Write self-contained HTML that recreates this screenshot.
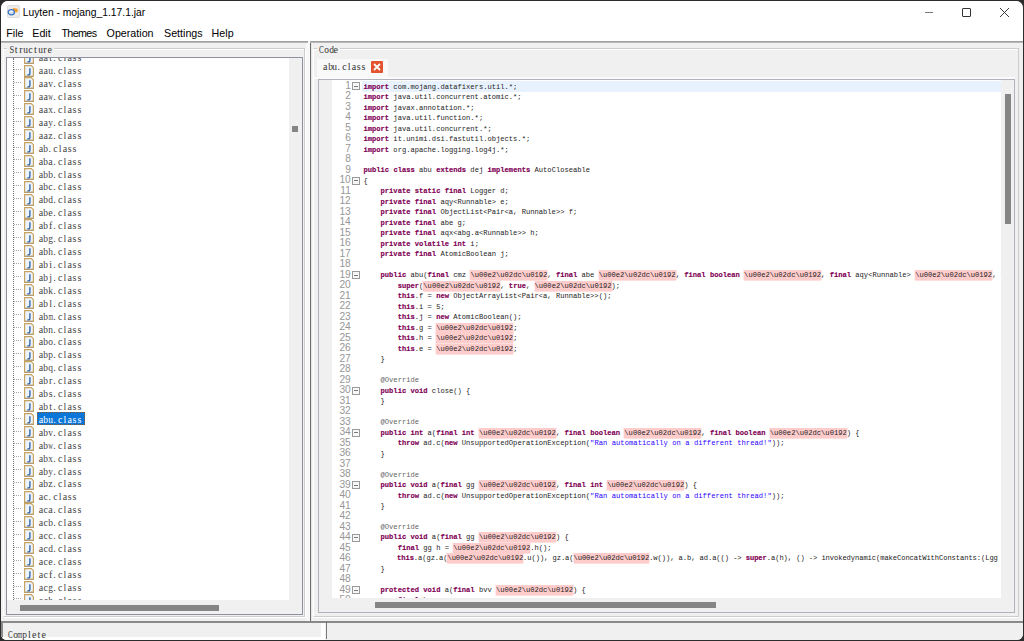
<!DOCTYPE html>
<html><head><meta charset="utf-8"><style>
html,body{margin:0;padding:0;}
body{width:1024px;height:641px;overflow:hidden;background:#2c2c2c;position:relative;font-family:"Liberation Sans",sans-serif;}
.abs{position:absolute;}
#win{position:absolute;left:1px;top:1px;width:1022px;height:639px;background:#f0f0f0;border-radius:7px 7px 6px 6px;overflow:hidden;}
#in{position:absolute;left:-1px;top:-1px;width:1024px;height:641px;}
#in div{position:absolute;}
.title{left:22.7px;top:5.8px;font-size:10.3px;color:#000;white-space:pre;line-height:14px;}
.menu{top:27px;font-size:10.7px;color:#000;line-height:13px;white-space:pre;}
.tt{left:38.6px;font-family:"Liberation Serif",serif;font-size:10px;line-height:11px;height:11px;color:#454545;white-space:pre;}
.tt.sel{color:#fff;}
.selbox{left:37px;width:46px;height:10.5px;background:#0a76d8;border:1px dotted #8a5a30;}
.tdash{left:14px;width:7px;height:0;border-top:1px dotted #a8a8a8;}
.ticon{position:absolute;left:24px;}
.J{left:2.2px;top:-0.5px;font-size:8px;font-weight:bold;color:#2f6fb8;line-height:10px;font-family:"Liberation Sans",sans-serif;}
.cl{transform:scaleY(1.1);transform-origin:0 7.1px;left:363.45px;font-family:"Liberation Mono",monospace;font-size:7.13px;line-height:10.48px;height:10.48px;white-space:pre;color:#1c1c1c;}
.k{color:#7f0055;font-weight:bold;-webkit-text-stroke:0.15px #7f0055;}
.s{color:#2a00ff;letter-spacing:0.05px;}
.an{color:#646464;}
.u{display:inline-block;vertical-align:top;height:10.01px;line-height:10.48px;background:linear-gradient(to bottom,transparent 0.74px,#ffcccc 0.74px);box-shadow:0.4px 0 0 #ffcccc,-0.4px 0 0 #ffcccc;}
.ln{left:320px;width:30.8px;text-align:right;font-size:10.2px;line-height:10.48px;color:#969696;}
.fold{left:352px;width:6px;height:6px;border:1px solid #9a9a9a;background:#f6f6f6;}
.fold::after{content:"";position:absolute;left:1px;top:2.5px;width:4px;height:1.2px;background:#7a7a7a;}
.etched{border:1px solid #cdcdcd;border-left-color:#fff;box-shadow:inset 0 1px 0 #fff, 1px 1px 0 #fff;}
.spb{border:1px solid #8c90a0;}
.spb2{border:1px solid #b1b2ba;}
.thumb{background:#858585;}
.ptitle{font-family:"Liberation Serif",serif;font-size:10px;line-height:11px;white-space:pre;color:#333;background:#f0f0f0;padding:0 2px;}

i.c{font-style:normal;display:inline-block;text-align:center;}

</style></head><body>
<div id="win"><div id="in">
  <!-- title + menu white -->
  <div style="left:0;top:0;width:1024px;height:41px;background:#fff;"></div>
  <!-- app icon -->
  <svg style="position:absolute;left:7px;top:5px" width="13" height="13" viewBox="0 0 13 13"><rect x="0.5" y="0.5" width="12" height="12" rx="1.5" fill="#ededed" stroke="#dedede"/><path d="M6 3 L10 3.6 L11.2 5.4 L10 7.2 L6 7.6 Z" fill="#f5a032"/><ellipse cx="4.3" cy="7.2" rx="3.1" ry="2.6" fill="#f6f9fd" stroke="#3b73c1" stroke-width="1.3"/><path d="M2.3 8 H6.5" stroke="#8fb0d8" stroke-width="0.8"/></svg>
  <div class="title">Luyten - mojang_1.17.1.jar</div>
  <!-- window controls -->
  <div style="left:925px;top:12px;width:8px;height:1px;background:#777;"></div>
  <div style="left:962px;top:8px;width:7px;height:7px;border:1px solid #333;border-radius:1px;"></div>
  <svg style="position:absolute;left:999px;top:7px" width="11" height="11" viewBox="0 0 11 11"><path d="M1 1 L10 10 M10 1 L1 10" stroke="#3a3a3a" stroke-width="1"/></svg>
  <!-- menu -->
  <div class="menu" style="left:6.3px">File</div>
  <div class="menu" style="left:32.3px">Edit</div>
  <div class="menu" style="left:61.4px;letter-spacing:-0.6px">Themes</div>
  <div class="menu" style="left:106.6px">Operation</div>
  <div class="menu" style="left:164px">Settings</div>
  <div class="menu" style="left:211.6px">Help</div>
  <!-- menubar bottom line -->
  <div style="left:0;top:41px;width:1024px;height:1px;background:#a0a0a0;"></div>
  <div style="left:0;top:42px;width:1024px;height:1px;background:#b8b8b8;"></div>

  <!-- LEFT PANEL -->
  <div class="etched" style="left:3px;top:48px;width:300px;height:567px;"></div>
  <div class="ptitle" style="left:7px;top:43.7px;"><i class="c" style="width:4.8px"><i class="c" style="width:5.56px;margin-left:-0.38px;transform:scaleX(0.845)">S</i></i><i class="c" style="width:4.8px">t</i><i class="c" style="width:4.8px">r</i><i class="c" style="width:4.8px"><i class="c" style="width:5.00px;margin-left:-0.10px;transform:scaleX(0.940)">u</i></i><i class="c" style="width:4.8px">c</i><i class="c" style="width:4.8px">t</i><i class="c" style="width:4.8px"><i class="c" style="width:5.00px;margin-left:-0.10px;transform:scaleX(0.940)">u</i></i><i class="c" style="width:4.8px">r</i><i class="c" style="width:4.8px">e</i></div>
  <div class="spb" style="left:6px;top:57px;width:295px;height:556px;background:#f0f0f0;"></div>
  <div style="left:7px;top:58px;width:282px;height:542px;background:#fff;overflow:hidden;">
    <div style="left:-7px;top:-58px;width:300px;height:660px;">
      <div style="left:13px;top:58px;width:0;height:542px;border-left:1px dotted #707070;"></div>
      <div class="tdash" style="top:56.19px"></div>
<svg class="ticon" style="top:51.59px" width="10" height="12" viewBox="0 0 10 12"><path d="M0.6 0.6 H7.3 L9.4 2.7 V11.4 H0.6 Z" fill="#eef4fb" stroke="#c6a35e" stroke-width="1.2"/><path d="M0.6 11.3 H9.4" stroke="#b09a78" stroke-width="1"/><path d="M5.9 3.2 V8.4 Q5.9 9.9 4.4 9.9 H3.4" stroke="#2d62a8" stroke-width="1.35" fill="none"/></svg>
<div class="tt" style="top:52.39px"><i class="c" style="width:4.8px">a</i><i class="c" style="width:4.8px">a</i><i class="c" style="width:4.8px">t</i><i class="c" style="text-align:left;padding-left:0.3px;width:4.5px">.</i><i class="c" style="width:4.8px">c</i><i class="c" style="width:4.8px">l</i><i class="c" style="width:4.8px">a</i><i class="c" style="width:4.8px">s</i><i class="c" style="width:4.8px">s</i></div>
<div class="tdash" style="top:69.10px"></div>
<svg class="ticon" style="top:64.50px" width="10" height="12" viewBox="0 0 10 12"><path d="M0.6 0.6 H7.3 L9.4 2.7 V11.4 H0.6 Z" fill="#eef4fb" stroke="#c6a35e" stroke-width="1.2"/><path d="M0.6 11.3 H9.4" stroke="#b09a78" stroke-width="1"/><path d="M5.9 3.2 V8.4 Q5.9 9.9 4.4 9.9 H3.4" stroke="#2d62a8" stroke-width="1.35" fill="none"/></svg>
<div class="tt" style="top:65.30px"><i class="c" style="width:4.8px">a</i><i class="c" style="width:4.8px">a</i><i class="c" style="width:4.8px"><i class="c" style="width:5.00px;margin-left:-0.10px;transform:scaleX(0.940)">u</i></i><i class="c" style="text-align:left;padding-left:0.3px;width:4.5px">.</i><i class="c" style="width:4.8px">c</i><i class="c" style="width:4.8px">l</i><i class="c" style="width:4.8px">a</i><i class="c" style="width:4.8px">s</i><i class="c" style="width:4.8px">s</i></div>
<div class="tdash" style="top:82.01px"></div>
<svg class="ticon" style="top:77.41px" width="10" height="12" viewBox="0 0 10 12"><path d="M0.6 0.6 H7.3 L9.4 2.7 V11.4 H0.6 Z" fill="#eef4fb" stroke="#c6a35e" stroke-width="1.2"/><path d="M0.6 11.3 H9.4" stroke="#b09a78" stroke-width="1"/><path d="M5.9 3.2 V8.4 Q5.9 9.9 4.4 9.9 H3.4" stroke="#2d62a8" stroke-width="1.35" fill="none"/></svg>
<div class="tt" style="top:78.21px"><i class="c" style="width:4.8px">a</i><i class="c" style="width:4.8px">a</i><i class="c" style="width:4.8px"><i class="c" style="width:5.00px;margin-left:-0.10px;transform:scaleX(0.940)">v</i></i><i class="c" style="text-align:left;padding-left:0.3px;width:4.5px">.</i><i class="c" style="width:4.8px">c</i><i class="c" style="width:4.8px">l</i><i class="c" style="width:4.8px">a</i><i class="c" style="width:4.8px">s</i><i class="c" style="width:4.8px">s</i></div>
<div class="tdash" style="top:94.92px"></div>
<svg class="ticon" style="top:90.32px" width="10" height="12" viewBox="0 0 10 12"><path d="M0.6 0.6 H7.3 L9.4 2.7 V11.4 H0.6 Z" fill="#eef4fb" stroke="#c6a35e" stroke-width="1.2"/><path d="M0.6 11.3 H9.4" stroke="#b09a78" stroke-width="1"/><path d="M5.9 3.2 V8.4 Q5.9 9.9 4.4 9.9 H3.4" stroke="#2d62a8" stroke-width="1.35" fill="none"/></svg>
<div class="tt" style="top:91.12px"><i class="c" style="width:4.8px">a</i><i class="c" style="width:4.8px">a</i><i class="c" style="width:4.8px"><i class="c" style="width:7.22px;margin-left:-1.21px;transform:scaleX(0.651)">w</i></i><i class="c" style="text-align:left;padding-left:0.3px;width:4.5px">.</i><i class="c" style="width:4.8px">c</i><i class="c" style="width:4.8px">l</i><i class="c" style="width:4.8px">a</i><i class="c" style="width:4.8px">s</i><i class="c" style="width:4.8px">s</i></div>
<div class="tdash" style="top:107.83px"></div>
<svg class="ticon" style="top:103.23px" width="10" height="12" viewBox="0 0 10 12"><path d="M0.6 0.6 H7.3 L9.4 2.7 V11.4 H0.6 Z" fill="#eef4fb" stroke="#c6a35e" stroke-width="1.2"/><path d="M0.6 11.3 H9.4" stroke="#b09a78" stroke-width="1"/><path d="M5.9 3.2 V8.4 Q5.9 9.9 4.4 9.9 H3.4" stroke="#2d62a8" stroke-width="1.35" fill="none"/></svg>
<div class="tt" style="top:104.03px"><i class="c" style="width:4.8px">a</i><i class="c" style="width:4.8px">a</i><i class="c" style="width:4.8px"><i class="c" style="width:5.00px;margin-left:-0.10px;transform:scaleX(0.940)">x</i></i><i class="c" style="text-align:left;padding-left:0.3px;width:4.5px">.</i><i class="c" style="width:4.8px">c</i><i class="c" style="width:4.8px">l</i><i class="c" style="width:4.8px">a</i><i class="c" style="width:4.8px">s</i><i class="c" style="width:4.8px">s</i></div>
<div class="tdash" style="top:120.74px"></div>
<svg class="ticon" style="top:116.14px" width="10" height="12" viewBox="0 0 10 12"><path d="M0.6 0.6 H7.3 L9.4 2.7 V11.4 H0.6 Z" fill="#eef4fb" stroke="#c6a35e" stroke-width="1.2"/><path d="M0.6 11.3 H9.4" stroke="#b09a78" stroke-width="1"/><path d="M5.9 3.2 V8.4 Q5.9 9.9 4.4 9.9 H3.4" stroke="#2d62a8" stroke-width="1.35" fill="none"/></svg>
<div class="tt" style="top:116.94px"><i class="c" style="width:4.8px">a</i><i class="c" style="width:4.8px">a</i><i class="c" style="width:4.8px"><i class="c" style="width:5.00px;margin-left:-0.10px;transform:scaleX(0.940)">y</i></i><i class="c" style="text-align:left;padding-left:0.3px;width:4.5px">.</i><i class="c" style="width:4.8px">c</i><i class="c" style="width:4.8px">l</i><i class="c" style="width:4.8px">a</i><i class="c" style="width:4.8px">s</i><i class="c" style="width:4.8px">s</i></div>
<div class="tdash" style="top:133.65px"></div>
<svg class="ticon" style="top:129.05px" width="10" height="12" viewBox="0 0 10 12"><path d="M0.6 0.6 H7.3 L9.4 2.7 V11.4 H0.6 Z" fill="#eef4fb" stroke="#c6a35e" stroke-width="1.2"/><path d="M0.6 11.3 H9.4" stroke="#b09a78" stroke-width="1"/><path d="M5.9 3.2 V8.4 Q5.9 9.9 4.4 9.9 H3.4" stroke="#2d62a8" stroke-width="1.35" fill="none"/></svg>
<div class="tt" style="top:129.85px"><i class="c" style="width:4.8px">a</i><i class="c" style="width:4.8px">a</i><i class="c" style="width:4.8px">z</i><i class="c" style="text-align:left;padding-left:0.3px;width:4.5px">.</i><i class="c" style="width:4.8px">c</i><i class="c" style="width:4.8px">l</i><i class="c" style="width:4.8px">a</i><i class="c" style="width:4.8px">s</i><i class="c" style="width:4.8px">s</i></div>
<div class="tdash" style="top:146.56px"></div>
<svg class="ticon" style="top:141.96px" width="10" height="12" viewBox="0 0 10 12"><path d="M0.6 0.6 H7.3 L9.4 2.7 V11.4 H0.6 Z" fill="#eef4fb" stroke="#c6a35e" stroke-width="1.2"/><path d="M0.6 11.3 H9.4" stroke="#b09a78" stroke-width="1"/><path d="M5.9 3.2 V8.4 Q5.9 9.9 4.4 9.9 H3.4" stroke="#2d62a8" stroke-width="1.35" fill="none"/></svg>
<div class="tt" style="top:142.76px"><i class="c" style="width:4.8px">a</i><i class="c" style="width:4.8px"><i class="c" style="width:5.00px;margin-left:-0.10px;transform:scaleX(0.940)">b</i></i><i class="c" style="text-align:left;padding-left:0.3px;width:4.5px">.</i><i class="c" style="width:4.8px">c</i><i class="c" style="width:4.8px">l</i><i class="c" style="width:4.8px">a</i><i class="c" style="width:4.8px">s</i><i class="c" style="width:4.8px">s</i></div>
<div class="tdash" style="top:159.47px"></div>
<svg class="ticon" style="top:154.87px" width="10" height="12" viewBox="0 0 10 12"><path d="M0.6 0.6 H7.3 L9.4 2.7 V11.4 H0.6 Z" fill="#eef4fb" stroke="#c6a35e" stroke-width="1.2"/><path d="M0.6 11.3 H9.4" stroke="#b09a78" stroke-width="1"/><path d="M5.9 3.2 V8.4 Q5.9 9.9 4.4 9.9 H3.4" stroke="#2d62a8" stroke-width="1.35" fill="none"/></svg>
<div class="tt" style="top:155.67px"><i class="c" style="width:4.8px">a</i><i class="c" style="width:4.8px"><i class="c" style="width:5.00px;margin-left:-0.10px;transform:scaleX(0.940)">b</i></i><i class="c" style="width:4.8px">a</i><i class="c" style="text-align:left;padding-left:0.3px;width:4.5px">.</i><i class="c" style="width:4.8px">c</i><i class="c" style="width:4.8px">l</i><i class="c" style="width:4.8px">a</i><i class="c" style="width:4.8px">s</i><i class="c" style="width:4.8px">s</i></div>
<div class="tdash" style="top:172.38px"></div>
<svg class="ticon" style="top:167.78px" width="10" height="12" viewBox="0 0 10 12"><path d="M0.6 0.6 H7.3 L9.4 2.7 V11.4 H0.6 Z" fill="#eef4fb" stroke="#c6a35e" stroke-width="1.2"/><path d="M0.6 11.3 H9.4" stroke="#b09a78" stroke-width="1"/><path d="M5.9 3.2 V8.4 Q5.9 9.9 4.4 9.9 H3.4" stroke="#2d62a8" stroke-width="1.35" fill="none"/></svg>
<div class="tt" style="top:168.58px"><i class="c" style="width:4.8px">a</i><i class="c" style="width:4.8px"><i class="c" style="width:5.00px;margin-left:-0.10px;transform:scaleX(0.940)">b</i></i><i class="c" style="width:4.8px"><i class="c" style="width:5.00px;margin-left:-0.10px;transform:scaleX(0.940)">b</i></i><i class="c" style="text-align:left;padding-left:0.3px;width:4.5px">.</i><i class="c" style="width:4.8px">c</i><i class="c" style="width:4.8px">l</i><i class="c" style="width:4.8px">a</i><i class="c" style="width:4.8px">s</i><i class="c" style="width:4.8px">s</i></div>
<div class="tdash" style="top:185.29px"></div>
<svg class="ticon" style="top:180.69px" width="10" height="12" viewBox="0 0 10 12"><path d="M0.6 0.6 H7.3 L9.4 2.7 V11.4 H0.6 Z" fill="#eef4fb" stroke="#c6a35e" stroke-width="1.2"/><path d="M0.6 11.3 H9.4" stroke="#b09a78" stroke-width="1"/><path d="M5.9 3.2 V8.4 Q5.9 9.9 4.4 9.9 H3.4" stroke="#2d62a8" stroke-width="1.35" fill="none"/></svg>
<div class="tt" style="top:181.49px"><i class="c" style="width:4.8px">a</i><i class="c" style="width:4.8px"><i class="c" style="width:5.00px;margin-left:-0.10px;transform:scaleX(0.940)">b</i></i><i class="c" style="width:4.8px">c</i><i class="c" style="text-align:left;padding-left:0.3px;width:4.5px">.</i><i class="c" style="width:4.8px">c</i><i class="c" style="width:4.8px">l</i><i class="c" style="width:4.8px">a</i><i class="c" style="width:4.8px">s</i><i class="c" style="width:4.8px">s</i></div>
<div class="tdash" style="top:198.20px"></div>
<svg class="ticon" style="top:193.60px" width="10" height="12" viewBox="0 0 10 12"><path d="M0.6 0.6 H7.3 L9.4 2.7 V11.4 H0.6 Z" fill="#eef4fb" stroke="#c6a35e" stroke-width="1.2"/><path d="M0.6 11.3 H9.4" stroke="#b09a78" stroke-width="1"/><path d="M5.9 3.2 V8.4 Q5.9 9.9 4.4 9.9 H3.4" stroke="#2d62a8" stroke-width="1.35" fill="none"/></svg>
<div class="tt" style="top:194.40px"><i class="c" style="width:4.8px">a</i><i class="c" style="width:4.8px"><i class="c" style="width:5.00px;margin-left:-0.10px;transform:scaleX(0.940)">b</i></i><i class="c" style="width:4.8px"><i class="c" style="width:5.00px;margin-left:-0.10px;transform:scaleX(0.940)">d</i></i><i class="c" style="text-align:left;padding-left:0.3px;width:4.5px">.</i><i class="c" style="width:4.8px">c</i><i class="c" style="width:4.8px">l</i><i class="c" style="width:4.8px">a</i><i class="c" style="width:4.8px">s</i><i class="c" style="width:4.8px">s</i></div>
<div class="tdash" style="top:211.11px"></div>
<svg class="ticon" style="top:206.51px" width="10" height="12" viewBox="0 0 10 12"><path d="M0.6 0.6 H7.3 L9.4 2.7 V11.4 H0.6 Z" fill="#eef4fb" stroke="#c6a35e" stroke-width="1.2"/><path d="M0.6 11.3 H9.4" stroke="#b09a78" stroke-width="1"/><path d="M5.9 3.2 V8.4 Q5.9 9.9 4.4 9.9 H3.4" stroke="#2d62a8" stroke-width="1.35" fill="none"/></svg>
<div class="tt" style="top:207.31px"><i class="c" style="width:4.8px">a</i><i class="c" style="width:4.8px"><i class="c" style="width:5.00px;margin-left:-0.10px;transform:scaleX(0.940)">b</i></i><i class="c" style="width:4.8px">e</i><i class="c" style="text-align:left;padding-left:0.3px;width:4.5px">.</i><i class="c" style="width:4.8px">c</i><i class="c" style="width:4.8px">l</i><i class="c" style="width:4.8px">a</i><i class="c" style="width:4.8px">s</i><i class="c" style="width:4.8px">s</i></div>
<div class="tdash" style="top:224.02px"></div>
<svg class="ticon" style="top:219.42px" width="10" height="12" viewBox="0 0 10 12"><path d="M0.6 0.6 H7.3 L9.4 2.7 V11.4 H0.6 Z" fill="#eef4fb" stroke="#c6a35e" stroke-width="1.2"/><path d="M0.6 11.3 H9.4" stroke="#b09a78" stroke-width="1"/><path d="M5.9 3.2 V8.4 Q5.9 9.9 4.4 9.9 H3.4" stroke="#2d62a8" stroke-width="1.35" fill="none"/></svg>
<div class="tt" style="top:220.22px"><i class="c" style="width:4.8px">a</i><i class="c" style="width:4.8px"><i class="c" style="width:5.00px;margin-left:-0.10px;transform:scaleX(0.940)">b</i></i><i class="c" style="width:4.8px">f</i><i class="c" style="text-align:left;padding-left:0.3px;width:4.5px">.</i><i class="c" style="width:4.8px">c</i><i class="c" style="width:4.8px">l</i><i class="c" style="width:4.8px">a</i><i class="c" style="width:4.8px">s</i><i class="c" style="width:4.8px">s</i></div>
<div class="tdash" style="top:236.93px"></div>
<svg class="ticon" style="top:232.33px" width="10" height="12" viewBox="0 0 10 12"><path d="M0.6 0.6 H7.3 L9.4 2.7 V11.4 H0.6 Z" fill="#eef4fb" stroke="#c6a35e" stroke-width="1.2"/><path d="M0.6 11.3 H9.4" stroke="#b09a78" stroke-width="1"/><path d="M5.9 3.2 V8.4 Q5.9 9.9 4.4 9.9 H3.4" stroke="#2d62a8" stroke-width="1.35" fill="none"/></svg>
<div class="tt" style="top:233.13px"><i class="c" style="width:4.8px">a</i><i class="c" style="width:4.8px"><i class="c" style="width:5.00px;margin-left:-0.10px;transform:scaleX(0.940)">b</i></i><i class="c" style="width:4.8px"><i class="c" style="width:5.00px;margin-left:-0.10px;transform:scaleX(0.940)">g</i></i><i class="c" style="text-align:left;padding-left:0.3px;width:4.5px">.</i><i class="c" style="width:4.8px">c</i><i class="c" style="width:4.8px">l</i><i class="c" style="width:4.8px">a</i><i class="c" style="width:4.8px">s</i><i class="c" style="width:4.8px">s</i></div>
<div class="tdash" style="top:249.84px"></div>
<svg class="ticon" style="top:245.24px" width="10" height="12" viewBox="0 0 10 12"><path d="M0.6 0.6 H7.3 L9.4 2.7 V11.4 H0.6 Z" fill="#eef4fb" stroke="#c6a35e" stroke-width="1.2"/><path d="M0.6 11.3 H9.4" stroke="#b09a78" stroke-width="1"/><path d="M5.9 3.2 V8.4 Q5.9 9.9 4.4 9.9 H3.4" stroke="#2d62a8" stroke-width="1.35" fill="none"/></svg>
<div class="tt" style="top:246.04px"><i class="c" style="width:4.8px">a</i><i class="c" style="width:4.8px"><i class="c" style="width:5.00px;margin-left:-0.10px;transform:scaleX(0.940)">b</i></i><i class="c" style="width:4.8px"><i class="c" style="width:5.00px;margin-left:-0.10px;transform:scaleX(0.940)">h</i></i><i class="c" style="text-align:left;padding-left:0.3px;width:4.5px">.</i><i class="c" style="width:4.8px">c</i><i class="c" style="width:4.8px">l</i><i class="c" style="width:4.8px">a</i><i class="c" style="width:4.8px">s</i><i class="c" style="width:4.8px">s</i></div>
<div class="tdash" style="top:262.75px"></div>
<svg class="ticon" style="top:258.15px" width="10" height="12" viewBox="0 0 10 12"><path d="M0.6 0.6 H7.3 L9.4 2.7 V11.4 H0.6 Z" fill="#eef4fb" stroke="#c6a35e" stroke-width="1.2"/><path d="M0.6 11.3 H9.4" stroke="#b09a78" stroke-width="1"/><path d="M5.9 3.2 V8.4 Q5.9 9.9 4.4 9.9 H3.4" stroke="#2d62a8" stroke-width="1.35" fill="none"/></svg>
<div class="tt" style="top:258.95px"><i class="c" style="width:4.8px">a</i><i class="c" style="width:4.8px"><i class="c" style="width:5.00px;margin-left:-0.10px;transform:scaleX(0.940)">b</i></i><i class="c" style="width:4.8px">i</i><i class="c" style="text-align:left;padding-left:0.3px;width:4.5px">.</i><i class="c" style="width:4.8px">c</i><i class="c" style="width:4.8px">l</i><i class="c" style="width:4.8px">a</i><i class="c" style="width:4.8px">s</i><i class="c" style="width:4.8px">s</i></div>
<div class="tdash" style="top:275.66px"></div>
<svg class="ticon" style="top:271.06px" width="10" height="12" viewBox="0 0 10 12"><path d="M0.6 0.6 H7.3 L9.4 2.7 V11.4 H0.6 Z" fill="#eef4fb" stroke="#c6a35e" stroke-width="1.2"/><path d="M0.6 11.3 H9.4" stroke="#b09a78" stroke-width="1"/><path d="M5.9 3.2 V8.4 Q5.9 9.9 4.4 9.9 H3.4" stroke="#2d62a8" stroke-width="1.35" fill="none"/></svg>
<div class="tt" style="top:271.86px"><i class="c" style="width:4.8px">a</i><i class="c" style="width:4.8px"><i class="c" style="width:5.00px;margin-left:-0.10px;transform:scaleX(0.940)">b</i></i><i class="c" style="width:4.8px">j</i><i class="c" style="text-align:left;padding-left:0.3px;width:4.5px">.</i><i class="c" style="width:4.8px">c</i><i class="c" style="width:4.8px">l</i><i class="c" style="width:4.8px">a</i><i class="c" style="width:4.8px">s</i><i class="c" style="width:4.8px">s</i></div>
<div class="tdash" style="top:288.57px"></div>
<svg class="ticon" style="top:283.97px" width="10" height="12" viewBox="0 0 10 12"><path d="M0.6 0.6 H7.3 L9.4 2.7 V11.4 H0.6 Z" fill="#eef4fb" stroke="#c6a35e" stroke-width="1.2"/><path d="M0.6 11.3 H9.4" stroke="#b09a78" stroke-width="1"/><path d="M5.9 3.2 V8.4 Q5.9 9.9 4.4 9.9 H3.4" stroke="#2d62a8" stroke-width="1.35" fill="none"/></svg>
<div class="tt" style="top:284.77px"><i class="c" style="width:4.8px">a</i><i class="c" style="width:4.8px"><i class="c" style="width:5.00px;margin-left:-0.10px;transform:scaleX(0.940)">b</i></i><i class="c" style="width:4.8px"><i class="c" style="width:5.00px;margin-left:-0.10px;transform:scaleX(0.940)">k</i></i><i class="c" style="text-align:left;padding-left:0.3px;width:4.5px">.</i><i class="c" style="width:4.8px">c</i><i class="c" style="width:4.8px">l</i><i class="c" style="width:4.8px">a</i><i class="c" style="width:4.8px">s</i><i class="c" style="width:4.8px">s</i></div>
<div class="tdash" style="top:301.48px"></div>
<svg class="ticon" style="top:296.88px" width="10" height="12" viewBox="0 0 10 12"><path d="M0.6 0.6 H7.3 L9.4 2.7 V11.4 H0.6 Z" fill="#eef4fb" stroke="#c6a35e" stroke-width="1.2"/><path d="M0.6 11.3 H9.4" stroke="#b09a78" stroke-width="1"/><path d="M5.9 3.2 V8.4 Q5.9 9.9 4.4 9.9 H3.4" stroke="#2d62a8" stroke-width="1.35" fill="none"/></svg>
<div class="tt" style="top:297.68px"><i class="c" style="width:4.8px">a</i><i class="c" style="width:4.8px"><i class="c" style="width:5.00px;margin-left:-0.10px;transform:scaleX(0.940)">b</i></i><i class="c" style="width:4.8px">l</i><i class="c" style="text-align:left;padding-left:0.3px;width:4.5px">.</i><i class="c" style="width:4.8px">c</i><i class="c" style="width:4.8px">l</i><i class="c" style="width:4.8px">a</i><i class="c" style="width:4.8px">s</i><i class="c" style="width:4.8px">s</i></div>
<div class="tdash" style="top:314.39px"></div>
<svg class="ticon" style="top:309.79px" width="10" height="12" viewBox="0 0 10 12"><path d="M0.6 0.6 H7.3 L9.4 2.7 V11.4 H0.6 Z" fill="#eef4fb" stroke="#c6a35e" stroke-width="1.2"/><path d="M0.6 11.3 H9.4" stroke="#b09a78" stroke-width="1"/><path d="M5.9 3.2 V8.4 Q5.9 9.9 4.4 9.9 H3.4" stroke="#2d62a8" stroke-width="1.35" fill="none"/></svg>
<div class="tt" style="top:310.59px"><i class="c" style="width:4.8px">a</i><i class="c" style="width:4.8px"><i class="c" style="width:5.00px;margin-left:-0.10px;transform:scaleX(0.940)">b</i></i><i class="c" style="width:4.8px"><i class="c" style="width:7.78px;margin-left:-1.49px;transform:scaleX(0.604)">m</i></i><i class="c" style="text-align:left;padding-left:0.3px;width:4.5px">.</i><i class="c" style="width:4.8px">c</i><i class="c" style="width:4.8px">l</i><i class="c" style="width:4.8px">a</i><i class="c" style="width:4.8px">s</i><i class="c" style="width:4.8px">s</i></div>
<div class="tdash" style="top:327.30px"></div>
<svg class="ticon" style="top:322.70px" width="10" height="12" viewBox="0 0 10 12"><path d="M0.6 0.6 H7.3 L9.4 2.7 V11.4 H0.6 Z" fill="#eef4fb" stroke="#c6a35e" stroke-width="1.2"/><path d="M0.6 11.3 H9.4" stroke="#b09a78" stroke-width="1"/><path d="M5.9 3.2 V8.4 Q5.9 9.9 4.4 9.9 H3.4" stroke="#2d62a8" stroke-width="1.35" fill="none"/></svg>
<div class="tt" style="top:323.50px"><i class="c" style="width:4.8px">a</i><i class="c" style="width:4.8px"><i class="c" style="width:5.00px;margin-left:-0.10px;transform:scaleX(0.940)">b</i></i><i class="c" style="width:4.8px"><i class="c" style="width:5.00px;margin-left:-0.10px;transform:scaleX(0.940)">n</i></i><i class="c" style="text-align:left;padding-left:0.3px;width:4.5px">.</i><i class="c" style="width:4.8px">c</i><i class="c" style="width:4.8px">l</i><i class="c" style="width:4.8px">a</i><i class="c" style="width:4.8px">s</i><i class="c" style="width:4.8px">s</i></div>
<div class="tdash" style="top:340.21px"></div>
<svg class="ticon" style="top:335.61px" width="10" height="12" viewBox="0 0 10 12"><path d="M0.6 0.6 H7.3 L9.4 2.7 V11.4 H0.6 Z" fill="#eef4fb" stroke="#c6a35e" stroke-width="1.2"/><path d="M0.6 11.3 H9.4" stroke="#b09a78" stroke-width="1"/><path d="M5.9 3.2 V8.4 Q5.9 9.9 4.4 9.9 H3.4" stroke="#2d62a8" stroke-width="1.35" fill="none"/></svg>
<div class="tt" style="top:336.41px"><i class="c" style="width:4.8px">a</i><i class="c" style="width:4.8px"><i class="c" style="width:5.00px;margin-left:-0.10px;transform:scaleX(0.940)">b</i></i><i class="c" style="width:4.8px"><i class="c" style="width:5.00px;margin-left:-0.10px;transform:scaleX(0.940)">o</i></i><i class="c" style="text-align:left;padding-left:0.3px;width:4.5px">.</i><i class="c" style="width:4.8px">c</i><i class="c" style="width:4.8px">l</i><i class="c" style="width:4.8px">a</i><i class="c" style="width:4.8px">s</i><i class="c" style="width:4.8px">s</i></div>
<div class="tdash" style="top:353.12px"></div>
<svg class="ticon" style="top:348.52px" width="10" height="12" viewBox="0 0 10 12"><path d="M0.6 0.6 H7.3 L9.4 2.7 V11.4 H0.6 Z" fill="#eef4fb" stroke="#c6a35e" stroke-width="1.2"/><path d="M0.6 11.3 H9.4" stroke="#b09a78" stroke-width="1"/><path d="M5.9 3.2 V8.4 Q5.9 9.9 4.4 9.9 H3.4" stroke="#2d62a8" stroke-width="1.35" fill="none"/></svg>
<div class="tt" style="top:349.32px"><i class="c" style="width:4.8px">a</i><i class="c" style="width:4.8px"><i class="c" style="width:5.00px;margin-left:-0.10px;transform:scaleX(0.940)">b</i></i><i class="c" style="width:4.8px"><i class="c" style="width:5.00px;margin-left:-0.10px;transform:scaleX(0.940)">p</i></i><i class="c" style="text-align:left;padding-left:0.3px;width:4.5px">.</i><i class="c" style="width:4.8px">c</i><i class="c" style="width:4.8px">l</i><i class="c" style="width:4.8px">a</i><i class="c" style="width:4.8px">s</i><i class="c" style="width:4.8px">s</i></div>
<div class="tdash" style="top:366.03px"></div>
<svg class="ticon" style="top:361.43px" width="10" height="12" viewBox="0 0 10 12"><path d="M0.6 0.6 H7.3 L9.4 2.7 V11.4 H0.6 Z" fill="#eef4fb" stroke="#c6a35e" stroke-width="1.2"/><path d="M0.6 11.3 H9.4" stroke="#b09a78" stroke-width="1"/><path d="M5.9 3.2 V8.4 Q5.9 9.9 4.4 9.9 H3.4" stroke="#2d62a8" stroke-width="1.35" fill="none"/></svg>
<div class="tt" style="top:362.23px"><i class="c" style="width:4.8px">a</i><i class="c" style="width:4.8px"><i class="c" style="width:5.00px;margin-left:-0.10px;transform:scaleX(0.940)">b</i></i><i class="c" style="width:4.8px"><i class="c" style="width:5.00px;margin-left:-0.10px;transform:scaleX(0.940)">q</i></i><i class="c" style="text-align:left;padding-left:0.3px;width:4.5px">.</i><i class="c" style="width:4.8px">c</i><i class="c" style="width:4.8px">l</i><i class="c" style="width:4.8px">a</i><i class="c" style="width:4.8px">s</i><i class="c" style="width:4.8px">s</i></div>
<div class="tdash" style="top:378.94px"></div>
<svg class="ticon" style="top:374.34px" width="10" height="12" viewBox="0 0 10 12"><path d="M0.6 0.6 H7.3 L9.4 2.7 V11.4 H0.6 Z" fill="#eef4fb" stroke="#c6a35e" stroke-width="1.2"/><path d="M0.6 11.3 H9.4" stroke="#b09a78" stroke-width="1"/><path d="M5.9 3.2 V8.4 Q5.9 9.9 4.4 9.9 H3.4" stroke="#2d62a8" stroke-width="1.35" fill="none"/></svg>
<div class="tt" style="top:375.14px"><i class="c" style="width:4.8px">a</i><i class="c" style="width:4.8px"><i class="c" style="width:5.00px;margin-left:-0.10px;transform:scaleX(0.940)">b</i></i><i class="c" style="width:4.8px">r</i><i class="c" style="text-align:left;padding-left:0.3px;width:4.5px">.</i><i class="c" style="width:4.8px">c</i><i class="c" style="width:4.8px">l</i><i class="c" style="width:4.8px">a</i><i class="c" style="width:4.8px">s</i><i class="c" style="width:4.8px">s</i></div>
<div class="tdash" style="top:391.85px"></div>
<svg class="ticon" style="top:387.25px" width="10" height="12" viewBox="0 0 10 12"><path d="M0.6 0.6 H7.3 L9.4 2.7 V11.4 H0.6 Z" fill="#eef4fb" stroke="#c6a35e" stroke-width="1.2"/><path d="M0.6 11.3 H9.4" stroke="#b09a78" stroke-width="1"/><path d="M5.9 3.2 V8.4 Q5.9 9.9 4.4 9.9 H3.4" stroke="#2d62a8" stroke-width="1.35" fill="none"/></svg>
<div class="tt" style="top:388.05px"><i class="c" style="width:4.8px">a</i><i class="c" style="width:4.8px"><i class="c" style="width:5.00px;margin-left:-0.10px;transform:scaleX(0.940)">b</i></i><i class="c" style="width:4.8px">s</i><i class="c" style="text-align:left;padding-left:0.3px;width:4.5px">.</i><i class="c" style="width:4.8px">c</i><i class="c" style="width:4.8px">l</i><i class="c" style="width:4.8px">a</i><i class="c" style="width:4.8px">s</i><i class="c" style="width:4.8px">s</i></div>
<div class="tdash" style="top:404.76px"></div>
<svg class="ticon" style="top:400.16px" width="10" height="12" viewBox="0 0 10 12"><path d="M0.6 0.6 H7.3 L9.4 2.7 V11.4 H0.6 Z" fill="#eef4fb" stroke="#c6a35e" stroke-width="1.2"/><path d="M0.6 11.3 H9.4" stroke="#b09a78" stroke-width="1"/><path d="M5.9 3.2 V8.4 Q5.9 9.9 4.4 9.9 H3.4" stroke="#2d62a8" stroke-width="1.35" fill="none"/></svg>
<div class="tt" style="top:400.96px"><i class="c" style="width:4.8px">a</i><i class="c" style="width:4.8px"><i class="c" style="width:5.00px;margin-left:-0.10px;transform:scaleX(0.940)">b</i></i><i class="c" style="width:4.8px">t</i><i class="c" style="text-align:left;padding-left:0.3px;width:4.5px">.</i><i class="c" style="width:4.8px">c</i><i class="c" style="width:4.8px">l</i><i class="c" style="width:4.8px">a</i><i class="c" style="width:4.8px">s</i><i class="c" style="width:4.8px">s</i></div>
<div class="tdash" style="top:417.67px"></div>
<svg class="ticon" style="top:413.07px" width="10" height="12" viewBox="0 0 10 12"><path d="M0.6 0.6 H7.3 L9.4 2.7 V11.4 H0.6 Z" fill="#eef4fb" stroke="#c6a35e" stroke-width="1.2"/><path d="M0.6 11.3 H9.4" stroke="#b09a78" stroke-width="1"/><path d="M5.9 3.2 V8.4 Q5.9 9.9 4.4 9.9 H3.4" stroke="#2d62a8" stroke-width="1.35" fill="none"/></svg>
<div class="selbox" style="top:412.47px"></div>
<div class="tt sel" style="top:413.87px"><i class="c" style="width:4.8px">a</i><i class="c" style="width:4.8px"><i class="c" style="width:5.00px;margin-left:-0.10px;transform:scaleX(0.940)">b</i></i><i class="c" style="width:4.8px"><i class="c" style="width:5.00px;margin-left:-0.10px;transform:scaleX(0.940)">u</i></i><i class="c" style="text-align:left;padding-left:0.3px;width:4.5px">.</i><i class="c" style="width:4.8px">c</i><i class="c" style="width:4.8px">l</i><i class="c" style="width:4.8px">a</i><i class="c" style="width:4.8px">s</i><i class="c" style="width:4.8px">s</i></div>
<div class="tdash" style="top:430.58px"></div>
<svg class="ticon" style="top:425.98px" width="10" height="12" viewBox="0 0 10 12"><path d="M0.6 0.6 H7.3 L9.4 2.7 V11.4 H0.6 Z" fill="#eef4fb" stroke="#c6a35e" stroke-width="1.2"/><path d="M0.6 11.3 H9.4" stroke="#b09a78" stroke-width="1"/><path d="M5.9 3.2 V8.4 Q5.9 9.9 4.4 9.9 H3.4" stroke="#2d62a8" stroke-width="1.35" fill="none"/></svg>
<div class="tt" style="top:426.78px"><i class="c" style="width:4.8px">a</i><i class="c" style="width:4.8px"><i class="c" style="width:5.00px;margin-left:-0.10px;transform:scaleX(0.940)">b</i></i><i class="c" style="width:4.8px"><i class="c" style="width:5.00px;margin-left:-0.10px;transform:scaleX(0.940)">v</i></i><i class="c" style="text-align:left;padding-left:0.3px;width:4.5px">.</i><i class="c" style="width:4.8px">c</i><i class="c" style="width:4.8px">l</i><i class="c" style="width:4.8px">a</i><i class="c" style="width:4.8px">s</i><i class="c" style="width:4.8px">s</i></div>
<div class="tdash" style="top:443.49px"></div>
<svg class="ticon" style="top:438.89px" width="10" height="12" viewBox="0 0 10 12"><path d="M0.6 0.6 H7.3 L9.4 2.7 V11.4 H0.6 Z" fill="#eef4fb" stroke="#c6a35e" stroke-width="1.2"/><path d="M0.6 11.3 H9.4" stroke="#b09a78" stroke-width="1"/><path d="M5.9 3.2 V8.4 Q5.9 9.9 4.4 9.9 H3.4" stroke="#2d62a8" stroke-width="1.35" fill="none"/></svg>
<div class="tt" style="top:439.69px"><i class="c" style="width:4.8px">a</i><i class="c" style="width:4.8px"><i class="c" style="width:5.00px;margin-left:-0.10px;transform:scaleX(0.940)">b</i></i><i class="c" style="width:4.8px"><i class="c" style="width:7.22px;margin-left:-1.21px;transform:scaleX(0.651)">w</i></i><i class="c" style="text-align:left;padding-left:0.3px;width:4.5px">.</i><i class="c" style="width:4.8px">c</i><i class="c" style="width:4.8px">l</i><i class="c" style="width:4.8px">a</i><i class="c" style="width:4.8px">s</i><i class="c" style="width:4.8px">s</i></div>
<div class="tdash" style="top:456.40px"></div>
<svg class="ticon" style="top:451.80px" width="10" height="12" viewBox="0 0 10 12"><path d="M0.6 0.6 H7.3 L9.4 2.7 V11.4 H0.6 Z" fill="#eef4fb" stroke="#c6a35e" stroke-width="1.2"/><path d="M0.6 11.3 H9.4" stroke="#b09a78" stroke-width="1"/><path d="M5.9 3.2 V8.4 Q5.9 9.9 4.4 9.9 H3.4" stroke="#2d62a8" stroke-width="1.35" fill="none"/></svg>
<div class="tt" style="top:452.60px"><i class="c" style="width:4.8px">a</i><i class="c" style="width:4.8px"><i class="c" style="width:5.00px;margin-left:-0.10px;transform:scaleX(0.940)">b</i></i><i class="c" style="width:4.8px"><i class="c" style="width:5.00px;margin-left:-0.10px;transform:scaleX(0.940)">x</i></i><i class="c" style="text-align:left;padding-left:0.3px;width:4.5px">.</i><i class="c" style="width:4.8px">c</i><i class="c" style="width:4.8px">l</i><i class="c" style="width:4.8px">a</i><i class="c" style="width:4.8px">s</i><i class="c" style="width:4.8px">s</i></div>
<div class="tdash" style="top:469.31px"></div>
<svg class="ticon" style="top:464.71px" width="10" height="12" viewBox="0 0 10 12"><path d="M0.6 0.6 H7.3 L9.4 2.7 V11.4 H0.6 Z" fill="#eef4fb" stroke="#c6a35e" stroke-width="1.2"/><path d="M0.6 11.3 H9.4" stroke="#b09a78" stroke-width="1"/><path d="M5.9 3.2 V8.4 Q5.9 9.9 4.4 9.9 H3.4" stroke="#2d62a8" stroke-width="1.35" fill="none"/></svg>
<div class="tt" style="top:465.51px"><i class="c" style="width:4.8px">a</i><i class="c" style="width:4.8px"><i class="c" style="width:5.00px;margin-left:-0.10px;transform:scaleX(0.940)">b</i></i><i class="c" style="width:4.8px"><i class="c" style="width:5.00px;margin-left:-0.10px;transform:scaleX(0.940)">y</i></i><i class="c" style="text-align:left;padding-left:0.3px;width:4.5px">.</i><i class="c" style="width:4.8px">c</i><i class="c" style="width:4.8px">l</i><i class="c" style="width:4.8px">a</i><i class="c" style="width:4.8px">s</i><i class="c" style="width:4.8px">s</i></div>
<div class="tdash" style="top:482.22px"></div>
<svg class="ticon" style="top:477.62px" width="10" height="12" viewBox="0 0 10 12"><path d="M0.6 0.6 H7.3 L9.4 2.7 V11.4 H0.6 Z" fill="#eef4fb" stroke="#c6a35e" stroke-width="1.2"/><path d="M0.6 11.3 H9.4" stroke="#b09a78" stroke-width="1"/><path d="M5.9 3.2 V8.4 Q5.9 9.9 4.4 9.9 H3.4" stroke="#2d62a8" stroke-width="1.35" fill="none"/></svg>
<div class="tt" style="top:478.42px"><i class="c" style="width:4.8px">a</i><i class="c" style="width:4.8px"><i class="c" style="width:5.00px;margin-left:-0.10px;transform:scaleX(0.940)">b</i></i><i class="c" style="width:4.8px">z</i><i class="c" style="text-align:left;padding-left:0.3px;width:4.5px">.</i><i class="c" style="width:4.8px">c</i><i class="c" style="width:4.8px">l</i><i class="c" style="width:4.8px">a</i><i class="c" style="width:4.8px">s</i><i class="c" style="width:4.8px">s</i></div>
<div class="tdash" style="top:495.13px"></div>
<svg class="ticon" style="top:490.53px" width="10" height="12" viewBox="0 0 10 12"><path d="M0.6 0.6 H7.3 L9.4 2.7 V11.4 H0.6 Z" fill="#eef4fb" stroke="#c6a35e" stroke-width="1.2"/><path d="M0.6 11.3 H9.4" stroke="#b09a78" stroke-width="1"/><path d="M5.9 3.2 V8.4 Q5.9 9.9 4.4 9.9 H3.4" stroke="#2d62a8" stroke-width="1.35" fill="none"/></svg>
<div class="tt" style="top:491.33px"><i class="c" style="width:4.8px">a</i><i class="c" style="width:4.8px">c</i><i class="c" style="text-align:left;padding-left:0.3px;width:4.5px">.</i><i class="c" style="width:4.8px">c</i><i class="c" style="width:4.8px">l</i><i class="c" style="width:4.8px">a</i><i class="c" style="width:4.8px">s</i><i class="c" style="width:4.8px">s</i></div>
<div class="tdash" style="top:508.04px"></div>
<svg class="ticon" style="top:503.44px" width="10" height="12" viewBox="0 0 10 12"><path d="M0.6 0.6 H7.3 L9.4 2.7 V11.4 H0.6 Z" fill="#eef4fb" stroke="#c6a35e" stroke-width="1.2"/><path d="M0.6 11.3 H9.4" stroke="#b09a78" stroke-width="1"/><path d="M5.9 3.2 V8.4 Q5.9 9.9 4.4 9.9 H3.4" stroke="#2d62a8" stroke-width="1.35" fill="none"/></svg>
<div class="tt" style="top:504.24px"><i class="c" style="width:4.8px">a</i><i class="c" style="width:4.8px">c</i><i class="c" style="width:4.8px">a</i><i class="c" style="text-align:left;padding-left:0.3px;width:4.5px">.</i><i class="c" style="width:4.8px">c</i><i class="c" style="width:4.8px">l</i><i class="c" style="width:4.8px">a</i><i class="c" style="width:4.8px">s</i><i class="c" style="width:4.8px">s</i></div>
<div class="tdash" style="top:520.95px"></div>
<svg class="ticon" style="top:516.35px" width="10" height="12" viewBox="0 0 10 12"><path d="M0.6 0.6 H7.3 L9.4 2.7 V11.4 H0.6 Z" fill="#eef4fb" stroke="#c6a35e" stroke-width="1.2"/><path d="M0.6 11.3 H9.4" stroke="#b09a78" stroke-width="1"/><path d="M5.9 3.2 V8.4 Q5.9 9.9 4.4 9.9 H3.4" stroke="#2d62a8" stroke-width="1.35" fill="none"/></svg>
<div class="tt" style="top:517.15px"><i class="c" style="width:4.8px">a</i><i class="c" style="width:4.8px">c</i><i class="c" style="width:4.8px"><i class="c" style="width:5.00px;margin-left:-0.10px;transform:scaleX(0.940)">b</i></i><i class="c" style="text-align:left;padding-left:0.3px;width:4.5px">.</i><i class="c" style="width:4.8px">c</i><i class="c" style="width:4.8px">l</i><i class="c" style="width:4.8px">a</i><i class="c" style="width:4.8px">s</i><i class="c" style="width:4.8px">s</i></div>
<div class="tdash" style="top:533.86px"></div>
<svg class="ticon" style="top:529.26px" width="10" height="12" viewBox="0 0 10 12"><path d="M0.6 0.6 H7.3 L9.4 2.7 V11.4 H0.6 Z" fill="#eef4fb" stroke="#c6a35e" stroke-width="1.2"/><path d="M0.6 11.3 H9.4" stroke="#b09a78" stroke-width="1"/><path d="M5.9 3.2 V8.4 Q5.9 9.9 4.4 9.9 H3.4" stroke="#2d62a8" stroke-width="1.35" fill="none"/></svg>
<div class="tt" style="top:530.06px"><i class="c" style="width:4.8px">a</i><i class="c" style="width:4.8px">c</i><i class="c" style="width:4.8px">c</i><i class="c" style="text-align:left;padding-left:0.3px;width:4.5px">.</i><i class="c" style="width:4.8px">c</i><i class="c" style="width:4.8px">l</i><i class="c" style="width:4.8px">a</i><i class="c" style="width:4.8px">s</i><i class="c" style="width:4.8px">s</i></div>
<div class="tdash" style="top:546.77px"></div>
<svg class="ticon" style="top:542.17px" width="10" height="12" viewBox="0 0 10 12"><path d="M0.6 0.6 H7.3 L9.4 2.7 V11.4 H0.6 Z" fill="#eef4fb" stroke="#c6a35e" stroke-width="1.2"/><path d="M0.6 11.3 H9.4" stroke="#b09a78" stroke-width="1"/><path d="M5.9 3.2 V8.4 Q5.9 9.9 4.4 9.9 H3.4" stroke="#2d62a8" stroke-width="1.35" fill="none"/></svg>
<div class="tt" style="top:542.97px"><i class="c" style="width:4.8px">a</i><i class="c" style="width:4.8px">c</i><i class="c" style="width:4.8px"><i class="c" style="width:5.00px;margin-left:-0.10px;transform:scaleX(0.940)">d</i></i><i class="c" style="text-align:left;padding-left:0.3px;width:4.5px">.</i><i class="c" style="width:4.8px">c</i><i class="c" style="width:4.8px">l</i><i class="c" style="width:4.8px">a</i><i class="c" style="width:4.8px">s</i><i class="c" style="width:4.8px">s</i></div>
<div class="tdash" style="top:559.68px"></div>
<svg class="ticon" style="top:555.08px" width="10" height="12" viewBox="0 0 10 12"><path d="M0.6 0.6 H7.3 L9.4 2.7 V11.4 H0.6 Z" fill="#eef4fb" stroke="#c6a35e" stroke-width="1.2"/><path d="M0.6 11.3 H9.4" stroke="#b09a78" stroke-width="1"/><path d="M5.9 3.2 V8.4 Q5.9 9.9 4.4 9.9 H3.4" stroke="#2d62a8" stroke-width="1.35" fill="none"/></svg>
<div class="tt" style="top:555.88px"><i class="c" style="width:4.8px">a</i><i class="c" style="width:4.8px">c</i><i class="c" style="width:4.8px">e</i><i class="c" style="text-align:left;padding-left:0.3px;width:4.5px">.</i><i class="c" style="width:4.8px">c</i><i class="c" style="width:4.8px">l</i><i class="c" style="width:4.8px">a</i><i class="c" style="width:4.8px">s</i><i class="c" style="width:4.8px">s</i></div>
<div class="tdash" style="top:572.59px"></div>
<svg class="ticon" style="top:567.99px" width="10" height="12" viewBox="0 0 10 12"><path d="M0.6 0.6 H7.3 L9.4 2.7 V11.4 H0.6 Z" fill="#eef4fb" stroke="#c6a35e" stroke-width="1.2"/><path d="M0.6 11.3 H9.4" stroke="#b09a78" stroke-width="1"/><path d="M5.9 3.2 V8.4 Q5.9 9.9 4.4 9.9 H3.4" stroke="#2d62a8" stroke-width="1.35" fill="none"/></svg>
<div class="tt" style="top:568.79px"><i class="c" style="width:4.8px">a</i><i class="c" style="width:4.8px">c</i><i class="c" style="width:4.8px">f</i><i class="c" style="text-align:left;padding-left:0.3px;width:4.5px">.</i><i class="c" style="width:4.8px">c</i><i class="c" style="width:4.8px">l</i><i class="c" style="width:4.8px">a</i><i class="c" style="width:4.8px">s</i><i class="c" style="width:4.8px">s</i></div>
<div class="tdash" style="top:585.50px"></div>
<svg class="ticon" style="top:580.90px" width="10" height="12" viewBox="0 0 10 12"><path d="M0.6 0.6 H7.3 L9.4 2.7 V11.4 H0.6 Z" fill="#eef4fb" stroke="#c6a35e" stroke-width="1.2"/><path d="M0.6 11.3 H9.4" stroke="#b09a78" stroke-width="1"/><path d="M5.9 3.2 V8.4 Q5.9 9.9 4.4 9.9 H3.4" stroke="#2d62a8" stroke-width="1.35" fill="none"/></svg>
<div class="tt" style="top:581.70px"><i class="c" style="width:4.8px">a</i><i class="c" style="width:4.8px">c</i><i class="c" style="width:4.8px"><i class="c" style="width:5.00px;margin-left:-0.10px;transform:scaleX(0.940)">g</i></i><i class="c" style="text-align:left;padding-left:0.3px;width:4.5px">.</i><i class="c" style="width:4.8px">c</i><i class="c" style="width:4.8px">l</i><i class="c" style="width:4.8px">a</i><i class="c" style="width:4.8px">s</i><i class="c" style="width:4.8px">s</i></div>
<div class="tdash" style="top:598.41px"></div>
<svg class="ticon" style="top:593.81px" width="10" height="12" viewBox="0 0 10 12"><path d="M0.6 0.6 H7.3 L9.4 2.7 V11.4 H0.6 Z" fill="#eef4fb" stroke="#c6a35e" stroke-width="1.2"/><path d="M0.6 11.3 H9.4" stroke="#b09a78" stroke-width="1"/><path d="M5.9 3.2 V8.4 Q5.9 9.9 4.4 9.9 H3.4" stroke="#2d62a8" stroke-width="1.35" fill="none"/></svg>
<div class="tt" style="top:594.61px"><i class="c" style="width:4.8px">a</i><i class="c" style="width:4.8px">c</i><i class="c" style="width:4.8px"><i class="c" style="width:5.00px;margin-left:-0.10px;transform:scaleX(0.940)">h</i></i><i class="c" style="text-align:left;padding-left:0.3px;width:4.5px">.</i><i class="c" style="width:4.8px">c</i><i class="c" style="width:4.8px">l</i><i class="c" style="width:4.8px">a</i><i class="c" style="width:4.8px">s</i><i class="c" style="width:4.8px">s</i></div>
    </div>
  </div>
  <div class="thumb" style="left:292px;top:126px;width:6px;height:6px;"></div>
  <div class="thumb" style="left:20px;top:605px;width:199px;height:6px;"></div>

  <!-- DIVIDER -->
  <div style="left:308px;top:41px;width:2px;height:3px;background:#fafafa;"></div>
  <div style="left:306px;top:43px;width:4px;height:578px;background:#f8f8f8;"></div>
  <div style="left:310px;top:43px;width:1px;height:578px;background:#6e6e6e;"></div>
  <div style="left:311px;top:43px;width:1px;height:578px;background:#e6e6e6;"></div>
  <div style="left:312px;top:43px;width:1px;height:578px;background:#f5f5f5;"></div>

  <!-- RIGHT PANEL -->
  <div class="etched" style="left:313px;top:48px;width:704px;height:567px;box-shadow:inset 0 1px 0 #fff, 0 1px 0 #fff;"></div>
  <div class="ptitle" style="left:317px;top:43.7px;"><i class="c" style="width:4.8px"><i class="c" style="width:6.67px;margin-left:-0.93px;transform:scaleX(0.705)">C</i></i><i class="c" style="width:4.8px"><i class="c" style="width:5.00px;margin-left:-0.10px;transform:scaleX(0.940)">o</i></i><i class="c" style="width:4.8px"><i class="c" style="width:5.00px;margin-left:-0.10px;transform:scaleX(0.940)">d</i></i><i class="c" style="width:4.8px">e</i></div>
  <div style="left:314px;top:77px;width:701px;height:2px;background:#fbfbfb;"></div>
  <div style="left:317px;top:59px;width:71px;height:18px;background:#f9f9f9;"></div>
  <div class="ptitle" style="left:320.8px;top:60.5px;background:transparent;"><i class="c" style="width:4.8px">a</i><i class="c" style="width:4.8px"><i class="c" style="width:5.00px;margin-left:-0.10px;transform:scaleX(0.940)">b</i></i><i class="c" style="width:4.8px"><i class="c" style="width:5.00px;margin-left:-0.10px;transform:scaleX(0.940)">u</i></i><i class="c" style="text-align:left;padding-left:0.3px;width:4.5px">.</i><i class="c" style="width:4.8px">c</i><i class="c" style="width:4.8px">l</i><i class="c" style="width:4.8px">a</i><i class="c" style="width:4.8px">s</i><i class="c" style="width:4.8px">s</i></div>
  <div style="left:371px;top:61px;width:12px;height:12px;background:#e2532e;border-radius:1px;"></div>
  <svg style="position:absolute;left:371px;top:61px" width="12" height="12" viewBox="0 0 12 12"><path d="M3 3 L9 9 M9 3 L3 9" stroke="#fff" stroke-width="1.8"/></svg>
  <div class="spb2" style="left:318px;top:79px;width:695px;height:532px;background:#f0f0f0;"></div>
  <div style="left:332px;top:80px;width:669px;height:518px;background:#fff;overflow:hidden;">
    <div style="left:-332px;top:-80px;width:1024px;height:641px;">
      <div style="left:362px;top:81.2px;width:700px;height:10.48px;background:#e8f2fe;"></div>
      <div class="cl" style="top:81.60px"><span class="k">import</span> com.mojang.datafixers.util.*;</div>
<div class="ln" style="top:80.60px">1</div>
<div class="fold" style="top:82.00px"></div>
<div class="cl" style="top:92.09px"><span class="k">import</span> java.util.concurrent.atomic.*;</div>
<div class="ln" style="top:91.10px">2</div>
<div class="cl" style="top:102.57px"><span class="k">import</span> javax.annotation.*;</div>
<div class="ln" style="top:101.60px">3</div>
<div class="cl" style="top:113.06px"><span class="k">import</span> java.util.function.*;</div>
<div class="ln" style="top:112.10px">4</div>
<div class="cl" style="top:123.54px"><span class="k">import</span> java.util.concurrent.*;</div>
<div class="ln" style="top:122.60px">5</div>
<div class="cl" style="top:134.03px"><span class="k">import</span> it.unimi.dsi.fastutil.objects.*;</div>
<div class="ln" style="top:133.10px">6</div>
<div class="cl" style="top:144.51px"><span class="k">import</span> org.apache.logging.log4j.*;</div>
<div class="ln" style="top:143.60px">7</div>
<div class="cl" style="top:155.00px"></div>
<div class="ln" style="top:154.10px">8</div>
<div class="cl" style="top:165.48px"><span class="k">public</span> <span class="k">class</span> abu <span class="k">extends</span> dej <span class="k">implements</span> AutoCloseable</div>
<div class="ln" style="top:164.60px">9</div>
<div class="cl" style="top:175.97px">{</div>
<div class="ln" style="top:175.10px">10</div>
<div class="fold" style="top:176.50px"></div>
<div class="cl" style="top:186.45px">    <span class="k">private</span> <span class="k">static</span> <span class="k">final</span> Logger d;</div>
<div class="ln" style="top:185.60px">11</div>
<div class="cl" style="top:196.94px">    <span class="k">private</span> <span class="k">final</span> aqy&lt;Runnable&gt; e;</div>
<div class="ln" style="top:196.10px">12</div>
<div class="cl" style="top:207.42px">    <span class="k">private</span> <span class="k">final</span> ObjectList&lt;Pair&lt;a, Runnable&gt;&gt; f;</div>
<div class="ln" style="top:206.60px">13</div>
<div class="cl" style="top:217.91px">    <span class="k">private</span> <span class="k">final</span> abe g;</div>
<div class="ln" style="top:217.10px">14</div>
<div class="cl" style="top:228.39px">    <span class="k">private</span> <span class="k">final</span> aqx&lt;abg.a&lt;Runnable&gt;&gt; h;</div>
<div class="ln" style="top:227.60px">15</div>
<div class="cl" style="top:238.87px">    <span class="k">private</span> <span class="k">volatile</span> <span class="k">int</span> i;</div>
<div class="ln" style="top:238.10px">16</div>
<div class="cl" style="top:249.36px">    <span class="k">private</span> <span class="k">final</span> AtomicBoolean j;</div>
<div class="ln" style="top:248.60px">17</div>
<div class="cl" style="top:259.84px"></div>
<div class="ln" style="top:259.10px">18</div>
<div class="cl" style="top:270.33px">    <span class="k">public</span> abu(<span class="k">final</span> cmz <span class="u">\u00e2\u02dc\u0192</span>, <span class="k">final</span> abe <span class="u">\u00e2\u02dc\u0192</span>, <span class="k">final</span> <span class="k">boolean</span> <span class="u">\u00e2\u02dc\u0192</span>, <span class="k">final</span> aqy&lt;Runnable&gt; <span class="u">\u00e2\u02dc\u0192</span>, <span class="k">final</span> a</div>
<div class="ln" style="top:269.60px">19</div>
<div class="fold" style="top:271.00px"></div>
<div class="cl" style="top:280.81px">        <span class="k">super</span>(<span class="u">\u00e2\u02dc\u0192</span>, <span class="k">true</span>, <span class="u">\u00e2\u02dc\u0192</span>);</div>
<div class="ln" style="top:280.10px">20</div>
<div class="cl" style="top:291.30px">        <span class="k">this</span>.f = <span class="k">new</span> ObjectArrayList&lt;Pair&lt;a, Runnable&gt;&gt;();</div>
<div class="ln" style="top:290.60px">21</div>
<div class="cl" style="top:301.78px">        <span class="k">this</span>.i = 5;</div>
<div class="ln" style="top:301.10px">22</div>
<div class="cl" style="top:312.27px">        <span class="k">this</span>.j = <span class="k">new</span> AtomicBoolean();</div>
<div class="ln" style="top:311.60px">23</div>
<div class="cl" style="top:322.75px">        <span class="k">this</span>.g = <span class="u">\u00e2\u02dc\u0192</span>;</div>
<div class="ln" style="top:322.10px">24</div>
<div class="cl" style="top:333.24px">        <span class="k">this</span>.h = <span class="u">\u00e2\u02dc\u0192</span>;</div>
<div class="ln" style="top:332.60px">25</div>
<div class="cl" style="top:343.72px">        <span class="k">this</span>.e = <span class="u">\u00e2\u02dc\u0192</span>;</div>
<div class="ln" style="top:343.10px">26</div>
<div class="cl" style="top:354.21px">    }</div>
<div class="ln" style="top:353.60px">27</div>
<div class="cl" style="top:364.69px"></div>
<div class="ln" style="top:364.10px">28</div>
<div class="cl" style="top:375.18px">    <span class="an">@Override</span></div>
<div class="ln" style="top:374.60px">29</div>
<div class="cl" style="top:385.66px">    <span class="k">public</span> <span class="k">void</span> close() {</div>
<div class="ln" style="top:385.10px">30</div>
<div class="fold" style="top:386.50px"></div>
<div class="cl" style="top:396.15px">    }</div>
<div class="ln" style="top:395.60px">31</div>
<div class="cl" style="top:406.63px"></div>
<div class="ln" style="top:406.10px">32</div>
<div class="cl" style="top:417.12px">    <span class="an">@Override</span></div>
<div class="ln" style="top:416.60px">33</div>
<div class="cl" style="top:427.60px">    <span class="k">public</span> <span class="k">int</span> a(<span class="k">final</span> <span class="k">int</span> <span class="u">\u00e2\u02dc\u0192</span>, <span class="k">final</span> <span class="k">boolean</span> <span class="u">\u00e2\u02dc\u0192</span>, <span class="k">final</span> <span class="k">boolean</span> <span class="u">\u00e2\u02dc\u0192</span>) {</div>
<div class="ln" style="top:427.10px">34</div>
<div class="fold" style="top:428.50px"></div>
<div class="cl" style="top:438.09px">        <span class="k">throw</span> ad.c(<span class="k">new</span> UnsupportedOperationException(<span class="s">&quot;Ran automatically on a different thread!&quot;</span>));</div>
<div class="ln" style="top:437.60px">35</div>
<div class="cl" style="top:448.57px">    }</div>
<div class="ln" style="top:448.10px">36</div>
<div class="cl" style="top:459.06px"></div>
<div class="ln" style="top:458.60px">37</div>
<div class="cl" style="top:469.54px">    <span class="an">@Override</span></div>
<div class="ln" style="top:469.10px">38</div>
<div class="cl" style="top:480.03px">    <span class="k">public</span> <span class="k">void</span> a(<span class="k">final</span> gg <span class="u">\u00e2\u02dc\u0192</span>, <span class="k">final</span> <span class="k">int</span> <span class="u">\u00e2\u02dc\u0192</span>) {</div>
<div class="ln" style="top:479.60px">39</div>
<div class="fold" style="top:481.00px"></div>
<div class="cl" style="top:490.51px">        <span class="k">throw</span> ad.c(<span class="k">new</span> UnsupportedOperationException(<span class="s">&quot;Ran automatically on a different thread!&quot;</span>));</div>
<div class="ln" style="top:490.10px">40</div>
<div class="cl" style="top:501.00px">    }</div>
<div class="ln" style="top:500.60px">41</div>
<div class="cl" style="top:511.48px"></div>
<div class="ln" style="top:511.10px">42</div>
<div class="cl" style="top:521.97px">    <span class="an">@Override</span></div>
<div class="ln" style="top:521.60px">43</div>
<div class="cl" style="top:532.45px">    <span class="k">public</span> <span class="k">void</span> a(<span class="k">final</span> gg <span class="u">\u00e2\u02dc\u0192</span>) {</div>
<div class="ln" style="top:532.10px">44</div>
<div class="fold" style="top:533.50px"></div>
<div class="cl" style="top:542.94px">        <span class="k">final</span> gg h = <span class="u">\u00e2\u02dc\u0192</span>.h();</div>
<div class="ln" style="top:542.60px">45</div>
<div class="cl" style="top:553.42px;letter-spacing:-0.075px">        <span class="k">this</span>.a(gz.a(<span class="u">\u00e2\u02dc\u0192</span>.u()), gz.a(<span class="u">\u00e2\u02dc\u0192</span>.w()), a.b, ad.a(() -&gt; <span class="k">super</span>.a(h), () -&gt; invokedynamic(makeConcatWithConstants:(Lgg</div>
<div class="ln" style="top:553.10px">46</div>
<div class="cl" style="top:563.91px">    }</div>
<div class="ln" style="top:563.60px">47</div>
<div class="cl" style="top:574.39px"></div>
<div class="ln" style="top:574.10px">48</div>
<div class="cl" style="top:584.88px">    <span class="k">protected</span> <span class="k">void</span> a(<span class="k">final</span> bvv <span class="u">\u00e2\u02dc\u0192</span>) {</div>
<div class="ln" style="top:584.60px">49</div>
<div class="fold" style="top:586.00px"></div>
<div class="cl" style="top:595.37px">        <span class="k">final</span> b</div>
<div class="ln" style="top:595.10px">50</div>
    </div>
  </div>
  <div class="thumb" style="left:1005px;top:94px;width:6px;height:130px;"></div>
  <div class="thumb" style="left:375px;top:602px;width:341px;height:6px;"></div>

  <!-- split pane bottom / status -->
  <div style="left:0;top:621px;width:1024px;height:2px;background:#8a8a8a;"></div>
  <div style="left:0;top:623px;width:1024px;height:18px;background:#f0f0f0;"></div>
  <div style="left:1px;top:621px;width:2px;height:18px;background:#8a8a8a;"></div>
  <div style="left:321px;top:623px;width:4px;height:14px;background:#fff;"></div>
  <div style="left:0;top:637px;width:325px;height:3px;background:#fff;"></div>
  <div style="left:326px;top:621px;width:1px;height:18px;background:#7a7a7a;"></div>
  <div class="ptitle" style="left:5.8px;top:628.8px;background:transparent;"><i class="c" style="width:4.8px"><i class="c" style="width:6.67px;margin-left:-0.93px;transform:scaleX(0.705)">C</i></i><i class="c" style="width:4.8px"><i class="c" style="width:5.00px;margin-left:-0.10px;transform:scaleX(0.940)">o</i></i><i class="c" style="width:4.8px"><i class="c" style="width:7.78px;margin-left:-1.49px;transform:scaleX(0.604)">m</i></i><i class="c" style="width:4.8px"><i class="c" style="width:5.00px;margin-left:-0.10px;transform:scaleX(0.940)">p</i></i><i class="c" style="width:4.8px">l</i><i class="c" style="width:4.8px">e</i><i class="c" style="width:4.8px">t</i><i class="c" style="width:4.8px">e</i></div>
</div></div>

</body></html>
